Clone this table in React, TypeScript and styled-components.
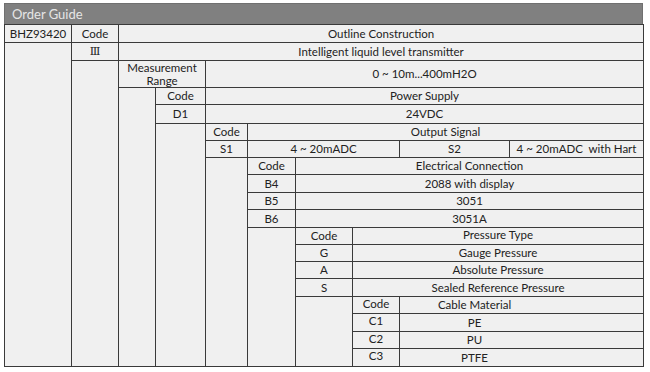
import React from "react";
import styled, { createGlobalStyle } from "styled-components";

const GlobalStyle = createGlobalStyle`
  html, body {
    margin: 0;
    padding: 0;
    background: #ffffff;
  }
`;

const Page = styled.div`
  padding: 3px 0 0 4px;
  width: 639px;
  font-family: Lato, "Liberation Sans", sans-serif;
`;

const Title = styled.div`
  height: 21px;
  line-height: 21px;
  background: #808080;
  color: #e6e6e6;
  font-size: 13px;
  padding-left: 7px;
  border: 1px solid #707070;
  border-bottom: none;
  box-sizing: border-box;
`;

const Table = styled.table`
  width: 639px;
  border-collapse: collapse;
  table-layout: fixed;
  background: #f0f0f0;
  border: 1px solid #808080;
`;

const Row = styled.tr<{ $h?: number }>`
  height: ${(p) => p.$h ?? 17}px;
`;

const Cell = styled.td<{ $pr?: number; $lift?: boolean; $wrap?: boolean }>`
  border: 1px solid #3a3a3a;
  padding: ${(p) => (p.$lift ? "0 0 3px" : "0")};
  padding-right: ${(p) => p.$pr ?? 0}px;
  text-align: center;
  vertical-align: middle;
  font-size: 11.5px;
  line-height: ${(p) => (p.$wrap ? 13 : 12)}px;
  color: #222;
  white-space: ${(p) => (p.$wrap ? "normal" : "nowrap")};
  overflow: hidden;
`;

const Numeral = styled.span`
  font-family: "DejaVu Serif", "Liberation Serif", serif;
  font-size: 11px;
`;

const Blank = styled.td`
  border: 1px solid #3a3a3a;
  padding: 0;
`;

const widths = [67, 47, 37, 50, 42, 48, 57, 47, 110, 134];

export default function App() {
  return (
    <>
      <GlobalStyle />
      <Page>
        <Title>Order Guide</Title>
        <Table>
          <colgroup>
            {widths.map((w, i) => (
              <col key={i} style={{ width: w }} />
            ))}
          </colgroup>
          <tbody>
            <Row $h={18}>
              <Cell>BHZ93420</Cell>
              <Cell>Code</Cell>
              <Cell colSpan={8}>Outline Construction</Cell>
            </Row>
            <Row $h={18}>
              <Blank rowSpan={18} />
              <Cell>
                <Numeral>Ⅲ</Numeral>
              </Cell>
              <Cell colSpan={8}>Intelligent liquid level transmitter</Cell>
            </Row>
            <Row $h={26}>
              <Blank rowSpan={17} />
              <Cell colSpan={2} $wrap>
                Measurement Range
              </Cell>
              <Cell colSpan={6}>0 ~ 10m...400mH2O</Cell>
            </Row>
            <Row $h={17}>
              <Blank rowSpan={16} />
              <Cell>Code</Cell>
              <Cell colSpan={6}>Power Supply</Cell>
            </Row>
            <Row $h={19}>
              <Cell>D1</Cell>
              <Cell colSpan={6}>24VDC</Cell>
            </Row>
            <Row>
              <Blank rowSpan={14} />
              <Cell>Code</Cell>
              <Cell colSpan={5}>Output Signal</Cell>
            </Row>
            <Row>
              <Cell>S1</Cell>
              <Cell colSpan={3}>4 ~ 20mADC</Cell>
              <Cell>S2</Cell>
              <Cell>4 ~ 20mADC&nbsp; with Hart</Cell>
            </Row>
            <Row>
              <Blank rowSpan={12} />
              <Cell>Code</Cell>
              <Cell colSpan={4}>Electrical Connection</Cell>
            </Row>
            <Row $h={18}>
              <Cell>B4</Cell>
              <Cell colSpan={4}>2088 with display</Cell>
            </Row>
            <Row>
              <Cell>B5</Cell>
              <Cell colSpan={4}>3051</Cell>
            </Row>
            <Row $h={18}>
              <Cell>B6</Cell>
              <Cell colSpan={4}>3051A</Cell>
            </Row>
            <Row>
              <Blank rowSpan={8} />
              <Cell>Code</Cell>
              <Cell colSpan={3} $lift>Pressure Type</Cell>
            </Row>
            <Row>
              <Cell>G</Cell>
              <Cell colSpan={3}>Gauge Pressure</Cell>
            </Row>
            <Row>
              <Cell>A</Cell>
              <Cell colSpan={3}>Absolute Pressure</Cell>
            </Row>
            <Row $h={18}>
              <Cell>S</Cell>
              <Cell colSpan={3}>Sealed Reference Pressure</Cell>
            </Row>
            <Row>
              <Blank rowSpan={4} />
              <Cell $lift>Code</Cell>
              <Cell colSpan={2} $pr={94}>Cable Material</Cell>
            </Row>
            <Row $h={18}>
              <Cell $lift>C1</Cell>
              <Cell colSpan={2} $pr={94}>PE</Cell>
            </Row>
            <Row>
              <Cell $lift>C2</Cell>
              <Cell colSpan={2} $pr={94}>PU</Cell>
            </Row>
            <Row $h={18}>
              <Cell $lift>C3</Cell>
              <Cell colSpan={2} $pr={94}>PTFE</Cell>
            </Row>
          </tbody>
        </Table>
      </Page>
    </>
  );
}
